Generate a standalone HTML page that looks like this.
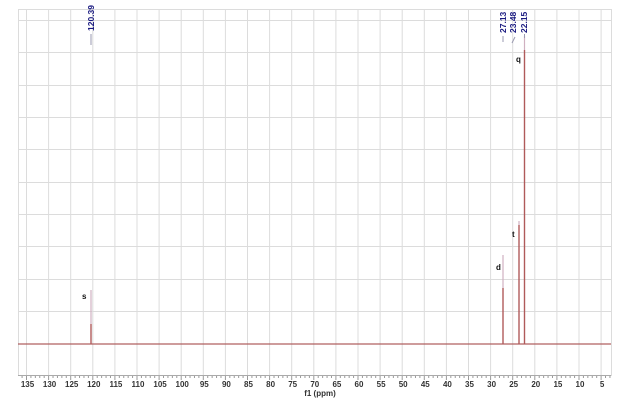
<!DOCTYPE html>
<html><head><style>html,body{margin:0;padding:0;background:#fff;}svg{display:block}</style></head>
<body>
<svg width="638" height="408" viewBox="0 0 638 408" xmlns="http://www.w3.org/2000/svg" font-family="Liberation Sans, sans-serif">
<rect width="638" height="408" fill="#fff"/>
<g stroke="#dcdcdc" stroke-width="1">
<rect x="18.5" y="9.5" width="593" height="366" fill="none"/>
<line x1="18" y1="20.5" x2="611" y2="20.5"/>
<line x1="18" y1="52.5" x2="611" y2="52.5"/>
<line x1="18" y1="85.5" x2="611" y2="85.5"/>
<line x1="18" y1="117.5" x2="611" y2="117.5"/>
<line x1="18" y1="149.5" x2="611" y2="149.5"/>
<line x1="18" y1="182.5" x2="611" y2="182.5"/>
<line x1="18" y1="214.5" x2="611" y2="214.5"/>
<line x1="18" y1="246.5" x2="611" y2="246.5"/>
<line x1="18" y1="279.5" x2="611" y2="279.5"/>
<line x1="18" y1="311.5" x2="611" y2="311.5"/>
</g>
<g id="vg" stroke="#dcdcdc" stroke-width="1"></g>
<g id="ticks" stroke="#999" stroke-width="1"></g>
<line x1="18" y1="375.5" x2="611" y2="375.5" stroke="#aaa"/>
<g id="lbl" font-size="8" font-weight="bold" fill="#333" text-anchor="middle"></g>
<text x="320" y="396" font-size="8" font-weight="bold" fill="#333" text-anchor="middle">f1 (ppm)</text>
<line x1="18" y1="344" x2="611" y2="344" stroke="#b06060" stroke-width="1.2"/>
<g stroke="#b05a5a" stroke-width="1.4">
<line x1="91" y1="344" x2="91" y2="324"/>
<line x1="503" y1="344" x2="503" y2="288"/>
<line x1="519" y1="344" x2="519" y2="225"/>
<line x1="524.5" y1="344" x2="524.5" y2="50"/>
</g>
<g stroke="#d0b0c0" stroke-width="1.2">
<line x1="91" y1="324" x2="91" y2="290"/>
<line x1="503" y1="288" x2="503" y2="255"/>
<line x1="519" y1="225" x2="519" y2="221"/>
<line x1="524.5" y1="50" x2="524.5" y2="36"/>
</g>
<g font-size="8" font-weight="bold" fill="#111">
<text x="82" y="299">s</text>
<text x="496" y="270">d</text>
<text x="512" y="237">t</text>
<text x="516" y="62">q</text>
</g>
<g font-size="8.5" font-weight="bold" fill="#1a1a80">
<text transform="translate(94,31) rotate(-90)">120.39</text>
<text transform="translate(506,33) rotate(-90)">27.13</text>
<text transform="translate(516,33) rotate(-90)">23.48</text>
<text transform="translate(527,33) rotate(-90)">22.15</text>
</g>
<g stroke="#9a9ab0" stroke-width="1">
<line x1="91" y1="34" x2="91" y2="45"/>
<line x1="503" y1="36" x2="503" y2="42"/>
<line x1="512" y1="43" x2="515" y2="37"/>
<line x1="524.5" y1="34" x2="524.5" y2="38"/>
</g>
<script>
var vg=document.getElementById('vg'),tk=document.getElementById('ticks'),lb=document.getElementById('lbl'),ns='http://www.w3.org/2000/svg';
function X(p){return 26.5+(135-p)*4.42;}
for(var p=135;p>=5;p-=5){var x=X(p);
var l=document.createElementNS(ns,'line');l.setAttribute('x1',x);l.setAttribute('x2',x);l.setAttribute('y1',9);l.setAttribute('y2',375);vg.appendChild(l);
var t=document.createElementNS(ns,'text');t.setAttribute('x',x+1);t.setAttribute('y',387);t.textContent=p;lb.appendChild(t);}
for(var p=136;p>=3;p-=1){var x=X(p);var m=(p%5==0);
var l=document.createElementNS(ns,'line');l.setAttribute('x1',x);l.setAttribute('x2',x);l.setAttribute('y1',376);l.setAttribute('y2',m?380:378);tk.appendChild(l);}
</script>
</svg>
</body></html>
